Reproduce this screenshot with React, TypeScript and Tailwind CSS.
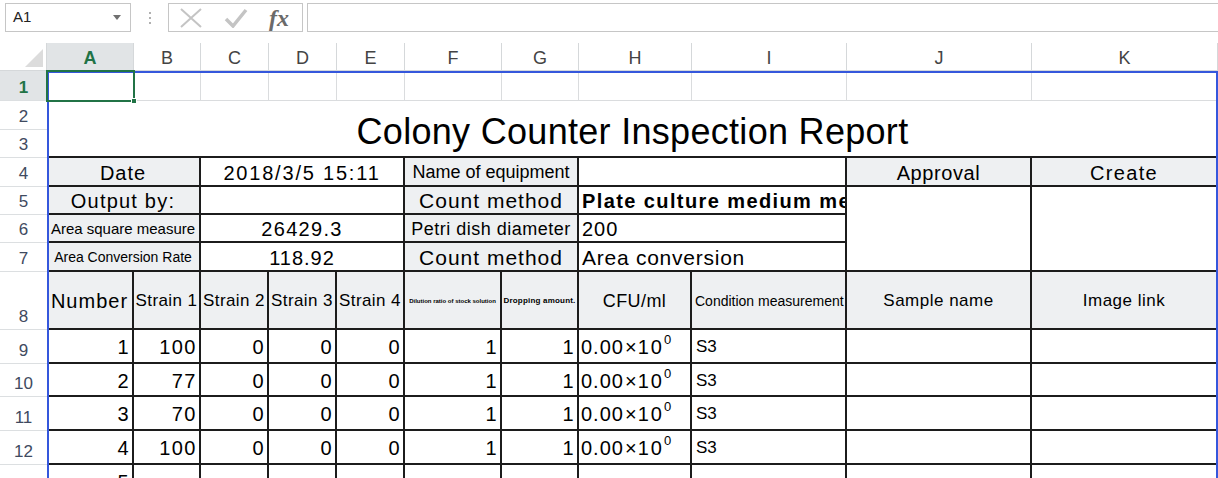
import React from "react";

const COLS = ["A", "B", "C", "D", "E", "F", "G", "H", "I", "J", "K"];

// 表の罫線・見出しセル・共通の並び
const line = "border-r-2 border-b-2 border-[#1c1c1c]";
const label = "bg-[#eef0f2]";
const box = "flex items-center overflow-hidden whitespace-nowrap pt-[2px]";

const DATA = [
  { n: 1, s1: 100 },
  { n: 2, s1: 77 },
  { n: 3, s1: 70 },
  { n: 4, s1: 100 },
];

function RowHead({ n, active = false }: { n: number; active?: boolean }) {
  return (
    <div
      className={`flex items-end justify-center border-b border-[#dcdfe1] pb-[4px] text-[17px] leading-none ${
        active ? "bg-[#e1e4e6] font-bold text-[#217346]" : "bg-white text-[#3f4a60]"
      }`}
    >
      {n}
    </div>
  );
}

function Num({ v }: { v?: number | string }) {
  return (
    <div className={`${line} ${box} justify-end pr-[2px] text-[20px] tracking-[1.5px]`}>
      {v}
    </div>
  );
}

function Toolbar() {
  return (
    <div className="flex h-[43px] items-start pt-[3px] pl-[5px]">
      <div className="flex h-[29px] w-[126px] items-center justify-between border border-[#c6c6c6] pl-[7px] pr-[9px] text-[15px] text-[#222]">
        <span>A1</span>
        <svg width="8" height="5" viewBox="0 0 8 5">
          <path d="M0 0 L8 0 L4 5 Z" fill="#707070" />
        </svg>
      </div>
      <div className="ml-[18px] mt-[9px] flex flex-col gap-[3px]">
        <span className="h-[2px] w-[2px] bg-[#b0b0b0]" />
        <span className="h-[2px] w-[2px] bg-[#b0b0b0]" />
        <span className="h-[2px] w-[2px] bg-[#b0b0b0]" />
      </div>
      <div className="ml-[17px] flex h-[29px] w-[135px] items-center border border-[#c6c6c6] pl-[10px]">
        <svg width="24" height="20" viewBox="0 0 24 20">
          <path d="M2 1 L22 19 M22 1 L2 19" stroke="#c4c4c4" strokeWidth="2" fill="none" />
        </svg>
        <svg className="ml-[21px]" width="24" height="20" viewBox="0 0 24 20">
          <path d="M2 11 L9 18 L22 2" stroke="#c4c4c4" strokeWidth="3.5" fill="none" />
        </svg>
        <span className="ml-[21px] font-['Liberation_Serif',serif] text-[24px] font-bold italic leading-none text-[#6a6a6a]">
          fx
        </span>
      </div>
      <div className="ml-[4px] h-[29px] flex-1 border-y border-l border-[#c6c6c6]" />
    </div>
  );
}

export default function App() {
  return (
    <div className="relative h-[478px] w-[1218px] overflow-hidden bg-white font-['Liberation_Sans',Arial,sans-serif] text-black">
      <Toolbar />

      <div className="grid grid-cols-[47px_87px_67px_68px_68px_68px_97px_77px_113px_155px_185px_186px] grid-rows-[28px_30px_29px_28px_29px_28px_28px_29px_58px_34px_33px_34px_34px_34px]">
        {/* 列見出し */}
        <div className="flex items-end justify-end border-r border-b border-[#d5d8da] p-[3px]">
          <svg width="18" height="18" viewBox="0 0 18 18">
            <path d="M18 0 L18 18 L0 18 Z" fill="#dcdcdc" />
          </svg>
        </div>
        {COLS.map((c) => (
          <div
            key={c}
            className={`flex items-center justify-center border-r border-b border-[#d5d8da] pt-[3px] text-[18px] ${
              c === "A" ? "bg-[#e1e4e6] font-bold text-[#217346]" : "text-[#444]"
            }`}
          >
            {c}
          </div>
        ))}

        {/* 1行目 */}
        <RowHead n={1} active />
        {COLS.map((c) => (
          <div key={c} className="border-r border-b border-[#dadcde]" />
        ))}

        {/* タイトル */}
        <RowHead n={2} />
        <div className="col-span-11 row-span-2 flex items-center justify-center border-b-2 border-[#1c1c1c] pt-[7px] text-[36px] tracking-[0.3px]">
          Colony Counter Inspection Report
        </div>
        <RowHead n={3} />

        {/* 4行目 */}
        <RowHead n={4} />
        <div className={`${line} ${box} ${label} col-span-2 justify-center text-[20px] tracking-[1px]`}>Date</div>
        <div className={`${line} ${box} col-span-3 justify-center text-[20px] tracking-[1.8px]`}>2018/3/5 15:11</div>
        <div className={`${line} ${box} ${label} col-span-2 justify-center text-[18px]`}>Name of equipment</div>
        <div className={`${line} col-span-2`} />
        <div className={`${line} ${box} ${label} justify-center text-[20px] tracking-[0.6px]`}>Approval</div>
        <div className={`${line} ${box} ${label} justify-center text-[20px] tracking-[1.3px]`}>Create</div>

        {/* 5行目 */}
        <RowHead n={5} />
        <div className={`${line} ${box} ${label} col-span-2 justify-center text-[20px] tracking-[1.2px]`}>Output by:</div>
        <div className={`${line} col-span-3`} />
        <div className={`${line} ${box} ${label} col-span-2 justify-center text-[21px] tracking-[1px]`}>Count method</div>
        <div className={`${line} ${box} col-span-2 pl-[3px] text-[20px] font-bold tracking-[1.4px]`}>
          Plate culture medium method
        </div>
        <div className={`${line} row-span-3`} />
        <div className={`${line} row-span-3`} />

        {/* 6行目 */}
        <RowHead n={6} />
        <div className={`${line} ${box} ${label} col-span-2 justify-center text-[15px]`}>Area square measure</div>
        <div className={`${line} ${box} col-span-3 justify-center text-[20px] tracking-[1.3px]`}>26429.3</div>
        <div className={`${line} ${box} ${label} col-span-2 justify-center text-[18px] tracking-[0.5px]`}>Petri dish diameter</div>
        <div className={`${line} ${box} col-span-2 pl-[3px] text-[20px] tracking-[1px]`}>200</div>

        {/* 7行目 */}
        <RowHead n={7} />
        <div className={`${line} ${box} ${label} col-span-2 justify-center text-[14px]`}>Area Conversion Rate</div>
        <div className={`${line} ${box} col-span-3 justify-center text-[20px] tracking-[1px]`}>118.92</div>
        <div className={`${line} ${box} ${label} col-span-2 justify-center text-[21px] tracking-[1px]`}>Count method</div>
        <div className={`${line} ${box} col-span-2 pl-[3px] text-[21px] tracking-[0.75px]`}>Area conversion</div>

        {/* 8行目: 項目名 */}
        <RowHead n={8} />
        <div className={`${line} ${box} ${label} justify-center text-[20px] tracking-[1px]`}>Number</div>
        {["Strain 1", "Strain 2", "Strain 3", "Strain 4"].map((s) => (
          <div key={s} className={`${line} ${box} ${label} justify-center text-[17px] tracking-[0.4px]`}>
            {s}
          </div>
        ))}
        <div className={`${line} ${box} ${label} justify-center text-[6px] font-bold`}>
          Dilution ratio of stock solution
        </div>
        <div className={`${line} ${box} ${label} justify-center text-[8px] font-bold tracking-[0.2px]`}>Dropping amount.</div>
        <div className={`${line} ${box} ${label} justify-center text-[18px] tracking-[0.4px]`}>CFU/ml</div>
        <div className={`${line} ${box} ${label} pl-[3px] text-[14px]`}>Condition measurement</div>
        <div className={`${line} ${box} ${label} justify-center text-[17px] tracking-[0.5px]`}>Sample name</div>
        <div className={`${line} ${box} ${label} justify-center text-[17px] tracking-[0.5px]`}>Image link</div>

        {/* データ行 */}
        {DATA.map((d, i) => (
          <React.Fragment key={d.n}>
            <RowHead n={9 + i} />
            <Num v={d.n} />
            <Num v={d.s1} />
            <Num v={0} />
            <Num v={0} />
            <Num v={0} />
            <Num v={1} />
            <Num v={1} />
            <div className={`${line} ${box} pl-[2px] text-[20px]`}>
              <span className="tracking-[1px]">0.00</span>
              <span className="mx-[1px] text-[20px]">×</span>
              <span className="tracking-[2px]">10</span>
              <span className="mb-[14px] text-[13px]">0</span>
            </div>
            <div className={`${line} ${box} pl-[4px] text-[17px]`}>S3</div>
            <div className={line} />
            <div className={line} />
          </React.Fragment>
        ))}

        <RowHead n={13} />
        <Num v={5} />
        {COLS.slice(1).map((c) => (
          <div key={c} className={line} />
        ))}
      </div>

      {/* 改ページ線 */}
      <div className="pointer-events-none absolute left-[47px] top-[71px] right-0 bottom-0 border-l-2 border-t-2 border-r-2 border-[#3557dc]" />
      {/* 選択セル A1 */}
      <div className="pointer-events-none absolute left-[46px] top-[70px] h-[32px] w-[89px] border-2 border-[#217346]" />
      <div className="pointer-events-none absolute left-[131px] top-[98px] h-[6px] w-[6px] border border-white bg-[#217346]" />
    </div>
  );
}
